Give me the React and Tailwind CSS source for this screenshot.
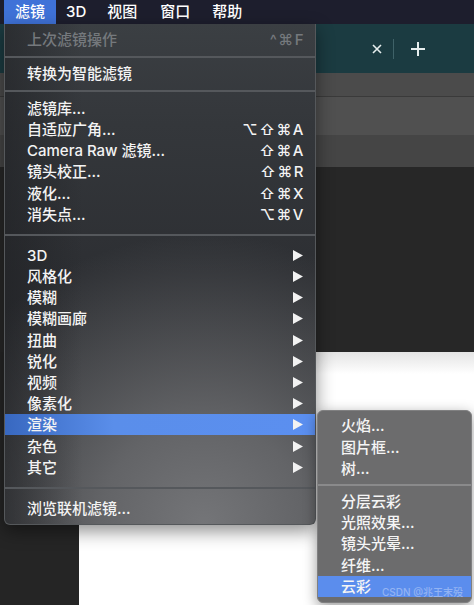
const font = { fontFamily: '"Inter", "Noto Sans CJK SC", sans-serif' }

const Arrow = () => (
  <svg width="10" height="11" viewBox="0 0 10 11" className="shrink-0">
    <polygon points="0,0 10,5.5 0,11" fill="#f2f2f2" />
  </svg>
)

const Row = ({ label, shortcut, arrow, disabled, active }) => (
  <div
    className={`flex h-[21.2px] items-center justify-between pl-[22px] ${arrow ? 'pr-[12px]' : 'pr-[10px]'} ${
      active ? 'bg-[linear-gradient(90deg,#3868c0_0%,#5a8eea_35%,#5b8ff0_100%)]' : ''
    }`}
  >
    <span className={`text-[15px] leading-none font-medium ${disabled ? 'text-[#75797d]' : 'text-[#f3f3f3]'}`}>
      {label}
    </span>
    {shortcut && (
      <span
        className={`text-[15px] leading-none tracking-[1.5px] font-medium ${disabled ? 'text-[#75797d]' : 'text-[#f3f3f3]'}`}
        style={{ fontFamily: '"Inter", "DejaVu Sans", sans-serif' }}
      >
        {shortcut}
      </span>
    )}
    {arrow && <Arrow />}
  </div>
)

const Sep = ({ h, light }) => (
  <div className={`flex ${h} items-center`}>
    <div className={`h-[2px] w-full ${light ? 'bg-[#8a8a8b]' : 'bg-[#55585c]'}`} />
  </div>
)

const filterGroups = [
  '3D',
  '风格化',
  '模糊',
  '模糊画廊',
  '扭曲',
  '锐化',
  '视频',
  '像素化',
  '渲染',
  '杂色',
  '其它',
]

export default function App() {
  return (
    <div className="relative h-[605px] w-[474px] overflow-hidden bg-[#262626]" style={font}>
      {/* menu bar */}
      <div className="flex h-[24px] items-center bg-[#1d1e2d] text-[15px] font-medium text-white">
        <div className="flex h-full w-[52px] items-center justify-center ml-[4px] bg-[#3f72d8]">滤镜</div>
        <span className="ml-[10px]">3D</span>
        <span className="ml-[21px]">视图</span>
        <span className="ml-[23px]">窗口</span>
        <span className="ml-[22px]">帮助</span>
      </div>

      {/* document tab bar */}
      <div className="flex h-[49px] items-center bg-[#1b3b41] pl-[371px]">
        <svg width="12" height="12" viewBox="0 0 12 12">
          <path d="M2 2 L10 10 M10 2 L2 10" stroke="#e6eeee" strokeWidth="1.6" />
        </svg>
        <div className="ml-[10px] h-[20px] w-px bg-[#3f6268]" />
        <svg width="16" height="16" viewBox="0 0 16 16" className="ml-[16px]">
          <path d="M8 1 V15 M1 8 H15" stroke="#e6eeee" strokeWidth="2" />
        </svg>
      </div>

      {/* panels behind */}
      <div className="h-[24px] bg-[#4b4b4b] border-b border-[#3a3a3a]" />
      <div className="h-[38px] bg-[#505050]" />
      <div className="h-[32px] bg-[#454545]" />
      <div className="h-[185px] bg-[#272727]" />
      <div className="flex h-[253px]">
        <div className="w-[79px] bg-[#252525]" />
        <div className="flex-1 bg-[linear-gradient(180deg,#e4e4e4_0px,#ffffff_22px)]" />
      </div>

      {/* filter menu */}
      <div className="absolute left-[4px] top-[24px] w-[312px] rounded-b-[6px] border border-t-0 border-[#55585b] bg-[linear-gradient(90deg,rgba(28,29,32,0.5)_0%,rgba(28,29,32,0)_25%),radial-gradient(ellipse_95%_58%_at_64%_100%,#747578_0%,#636467_35%,rgba(46,48,51,0)_100%),linear-gradient(180deg,#3b3f43_0%,#34373b_20%,#2d2f33_50%,#2c2e31_100%)] pt-[5.4px] pb-[5px] shadow-[0_6px_18px_rgba(0,0,0,0.45)]">
        <Row label="上次滤镜操作" shortcut="^⌘F" disabled />
        <Sep h="h-[12px]" />
        <Row label="转换为智能滤镜" />
        <Sep h="h-[13.9px]" />
        <Row label="滤镜库..." />
        <Row label="自适应广角..." shortcut="⌥⇧⌘A" />
        <Row label="Camera Raw 滤镜..." shortcut="⇧⌘A" />
        <Row label="镜头校正..." shortcut="⇧⌘R" />
        <Row label="液化..." shortcut="⇧⌘X" />
        <Row label="消失点..." shortcut="⌥⌘V" />
        <Sep h="h-[20px]" />
        {filterGroups.map((g) => (
          <Row key={g} label={g} arrow active={g === '渲染'} />
        ))}
        <Sep h="h-[19.6px]" />
        <Row label="浏览联机滤镜..." />
      </div>

      {/* render submenu */}
      <div className="absolute left-[317px] top-[410px] w-[155px] rounded-[6px] border border-[#808081] bg-[#6c6c6d] pt-[4.4px] pb-[5.6px] shadow-[0_4px_14px_rgba(0,0,0,0.4)]">
        {['火焰...', '图片框...', '树...'].map((t) => (
          <div key={t} className="flex h-[21.2px] items-center pl-[23px] text-[15px] leading-none font-medium text-[#f5f5f5]">
            {t}
          </div>
        ))}
        <Sep h="h-[12px]" light />
        {['分层云彩', '光照效果...', '镜头光晕...', '纤维...', '云彩'].map((t) => (
          <div
            key={t}
            className={`relative flex h-[21.2px] items-center pl-[23px] text-[15px] leading-none font-medium text-[#f5f5f5] ${
              t === '云彩' ? 'bg-[#5b8ded]' : ''
            }`}
          >
            {t}
            {t === '云彩' && (
              <span className="absolute right-[8px] top-[11px] text-[10px] leading-none text-white/35">CSDN @兆王末殁</span>
            )}
          </div>
        ))}
      </div>
    </div>
  )
}
